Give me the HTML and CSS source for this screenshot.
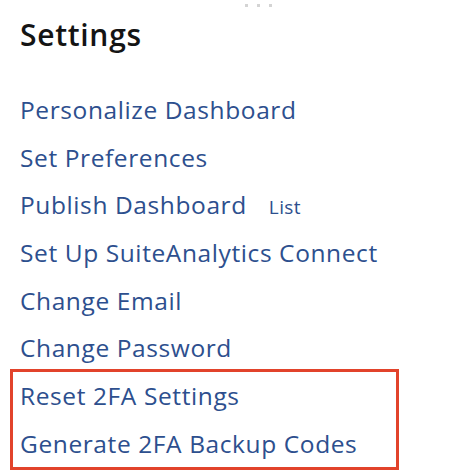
FILE: index.html
```html
<!DOCTYPE html>
<html lang="en">
<head>
<meta charset="utf-8">
<title>Settings</title>
<link rel="stylesheet" href="styles.css">
</head>
<body>
<div class="sheet">
  <div class="handle"><span></span><span></span><span></span></div>
  <h1 class="title">Settings</h1>
  <ul class="links">
    <li><a href="#">Personalize Dashboard</a></li>
    <li><a href="#">Set Preferences</a></li>
    <li><a href="#">Publish Dashboard</a><a href="#" class="small">List</a></li>
    <li><a href="#">Set Up SuiteAnalytics Connect</a></li>
    <li><a href="#">Change Email</a></li>
    <li><a href="#">Change Password</a></li>
  </ul>
  <ul class="links highlight">
    <li><a href="#">Reset 2FA Settings</a></li>
    <li><a href="#">Generate 2FA Backup Codes</a></li>
  </ul>
</div>
</body>
</html>
```

FILE: styles.css
```css
html, body {
  margin: 0;
  padding: 0;
  background: #ffffff;
}

.sheet {
  font-family: "Open Sans", "Noto Sans", sans-serif;
  padding: 0 0 0 20px;
}

.handle {
  display: flex;
  gap: 9px;
  margin: 4px 0 0 225px;
  height: 3px;
}

.handle span {
  width: 3px;
  height: 3px;
  background: #d4d4d4;
}

.title {
  margin: 10px 0 0 0;
  font-size: 30px;
  line-height: 36px;
  font-weight: 600;
  letter-spacing: 0.7px;
  color: #141414;
}

.links {
  list-style: none;
  margin: 33px 0 0 0;
  padding: 0;
}

.links li {
  height: 47.67px;
  line-height: 47.67px;
  font-size: 24.5px;
  letter-spacing: 0.6px;
  white-space: nowrap;
}

.links a {
  color: #2d4f8e;
  text-decoration: none;
}

.links a.small {
  font-size: 19px;
  letter-spacing: 0.4px;
  margin-left: 22px;
}

.highlight {
  margin: -3px 0 0 -10px;
  width: 389px;
  box-sizing: border-box;
  border: 3px solid #e2432b;
  padding-left: 7px;
}
```
